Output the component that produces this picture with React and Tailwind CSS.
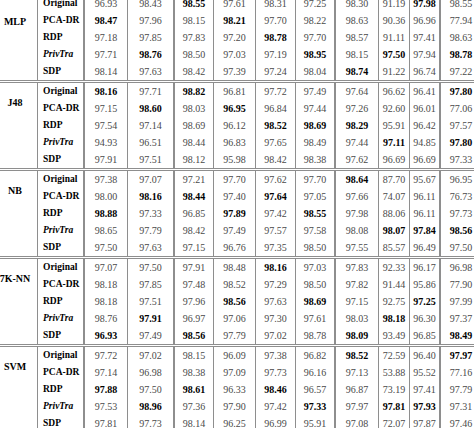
const groups = [
  {
    name: "MLP",
    rows: [
      ["96.93", "98.43", "*98.55", "97.61", "98.31", "97.25", "98.30", "91.19", "*97.98", "98.55"],
      ["*98.47", "97.96", "98.15", "*98.21", "97.70", "98.22", "98.63", "90.36", "96.96", "77.94"],
      ["97.18", "97.85", "97.83", "97.20", "*98.78", "97.70", "98.57", "91.11", "97.41", "98.63"],
      ["97.71", "*98.76", "98.50", "97.03", "97.19", "*98.95", "98.15", "*97.50", "97.94", "*98.78"],
      ["98.14", "97.63", "98.42", "97.39", "97.24", "98.04", "*98.74", "91.22", "96.74", "97.22"],
    ],
  },
  {
    name: "J48",
    rows: [
      ["*98.16", "97.71", "*98.82", "96.81", "97.72", "97.49", "97.64", "96.62", "96.41", "*97.80"],
      ["97.15", "*98.60", "98.03", "*96.95", "96.84", "97.44", "97.26", "92.60", "96.01", "77.06"],
      ["97.54", "97.14", "98.69", "96.12", "*98.52", "*98.69", "*98.29", "95.91", "96.42", "97.57"],
      ["94.93", "96.51", "98.44", "96.83", "97.65", "98.49", "97.44", "*97.11", "94.85", "*97.80"],
      ["97.91", "97.51", "98.12", "95.98", "98.42", "98.38", "97.62", "96.69", "96.69", "97.33"],
    ],
  },
  {
    name: "NB",
    rows: [
      ["97.38", "97.07", "97.21", "97.70", "97.62", "97.70", "*98.64", "87.70", "95.67", "96.95"],
      ["98.00", "*98.16", "*98.44", "97.40", "*97.64", "97.05", "97.66", "74.07", "96.11", "76.73"],
      ["*98.88", "97.33", "96.85", "*97.89", "97.42", "*98.55", "97.98", "88.06", "96.11", "97.73"],
      ["98.65", "97.79", "98.42", "97.49", "97.57", "97.58", "98.08", "*98.07", "*97.84", "*98.56"],
      ["97.50", "97.63", "97.15", "96.76", "97.35", "98.50", "97.55", "85.57", "96.49", "97.50"],
    ],
  },
  {
    name: "7K-NN",
    rows: [
      ["97.07", "97.50", "97.91", "98.48", "*98.16", "97.03", "97.83", "92.33", "96.17", "96.98"],
      ["98.18", "97.85", "97.48", "98.52", "97.29", "98.50", "97.82", "91.44", "95.86", "77.90"],
      ["98.18", "97.51", "97.96", "*98.56", "97.63", "*98.69", "97.15", "92.75", "*97.25", "97.99"],
      ["98.76", "*97.91", "96.97", "97.06", "97.30", "97.61", "98.03", "*98.18", "96.30", "97.37"],
      ["*96.93", "97.49", "*98.56", "97.79", "97.02", "98.78", "*98.09", "93.49", "96.85", "*98.49"],
    ],
  },
  {
    name: "SVM",
    rows: [
      ["97.72", "97.02", "98.15", "96.09", "97.38", "96.82", "*98.52", "72.59", "96.40", "*97.97"],
      ["97.14", "96.98", "98.38", "97.09", "97.73", "96.16", "97.13", "53.88", "95.52", "77.16"],
      ["*97.88", "97.50", "*98.61", "96.33", "*98.46", "96.57", "96.87", "73.19", "97.41", "97.79"],
      ["97.53", "*98.96", "97.36", "97.90", "97.42", "*97.33", "97.97", "*97.81", "*97.93", "97.31"],
      ["97.81", "97.73", "98.14", "96.25", "96.99", "95.91", "97.08", "72.07", "97.87", "97.46"],
    ],
  },
];

const methods = ["Original", "PCA-DR", "RDP", "PrivTra", "SDP"];

// one class string per value column, borders included
const cellCls = [
  "w-[43px] border-r border-[#8e8e8e]",
  "w-[47px] border-r-[2px] border-[#8e8e8e]",
  "w-[39px] border-r border-[#8e8e8e]",
  "w-[42px] border-r border-[#8e8e8e]",
  "w-[40px] border-r border-[#8e8e8e]",
  "w-[40px] border-r-[2px] border-[#8e8e8e]",
  "w-[43px] border-r border-[#8e8e8e]",
  "w-[31px] border-r border-[#8e8e8e]",
  "w-[31px] border-r-[2px] border-[#8e8e8e]",
  "w-[41px] border-r border-[#8e8e8e]",
];

function Value({ v, cls }) {
  const bold = v.startsWith("*");
  return (
    <div className={`${cls} shrink-0 flex items-center justify-center`}>
      <span className={bold ? "font-bold text-black" : "text-[#4a4a4a]"}>
        {bold ? v.slice(1) : v}
      </span>
    </div>
  );
}

function Group({ group, first }) {
  return (
    <div className="flex border-b-[3px] border-double border-[#8e8e8e]">
      <div
        className={`w-[38px] shrink-0 border-r border-[#8e8e8e] flex justify-center pr-[7px] ${first ? "pt-[20px]" : "pt-[13px]"}`}
      >
        <span className="font-bold text-black whitespace-nowrap leading-[13px] text-[10px]">
          {group.name}
        </span>
      </div>
      <div className="flex flex-col">
        {group.rows.map((row, i) => (
          <div key={i} className="flex h-[17px]">
            <div className="w-[47px] shrink-0 border-r-[2px] border-[#8e8e8e] flex items-center pl-[5px]">
              <span
                className={`font-bold text-black whitespace-nowrap text-[9.5px] ${methods[i] === "PrivTra" ? "italic" : ""}`}
              >
                {methods[i]}
              </span>
            </div>
            {row.map((v, j) => (
              <Value key={j} v={v} cls={cellCls[j]} />
            ))}
          </div>
        ))}
      </div>
    </div>
  );
}

export default function App() {
  return (
    <div className="w-[474px] h-[428px] overflow-hidden bg-white text-[10px] font-['Liberation_Serif',serif]">
      <div className="-mt-[5px]">
        {groups.map((g, i) => (
          <Group key={g.name} group={g} first={i === 0} />
        ))}
      </div>
    </div>
  );
}
